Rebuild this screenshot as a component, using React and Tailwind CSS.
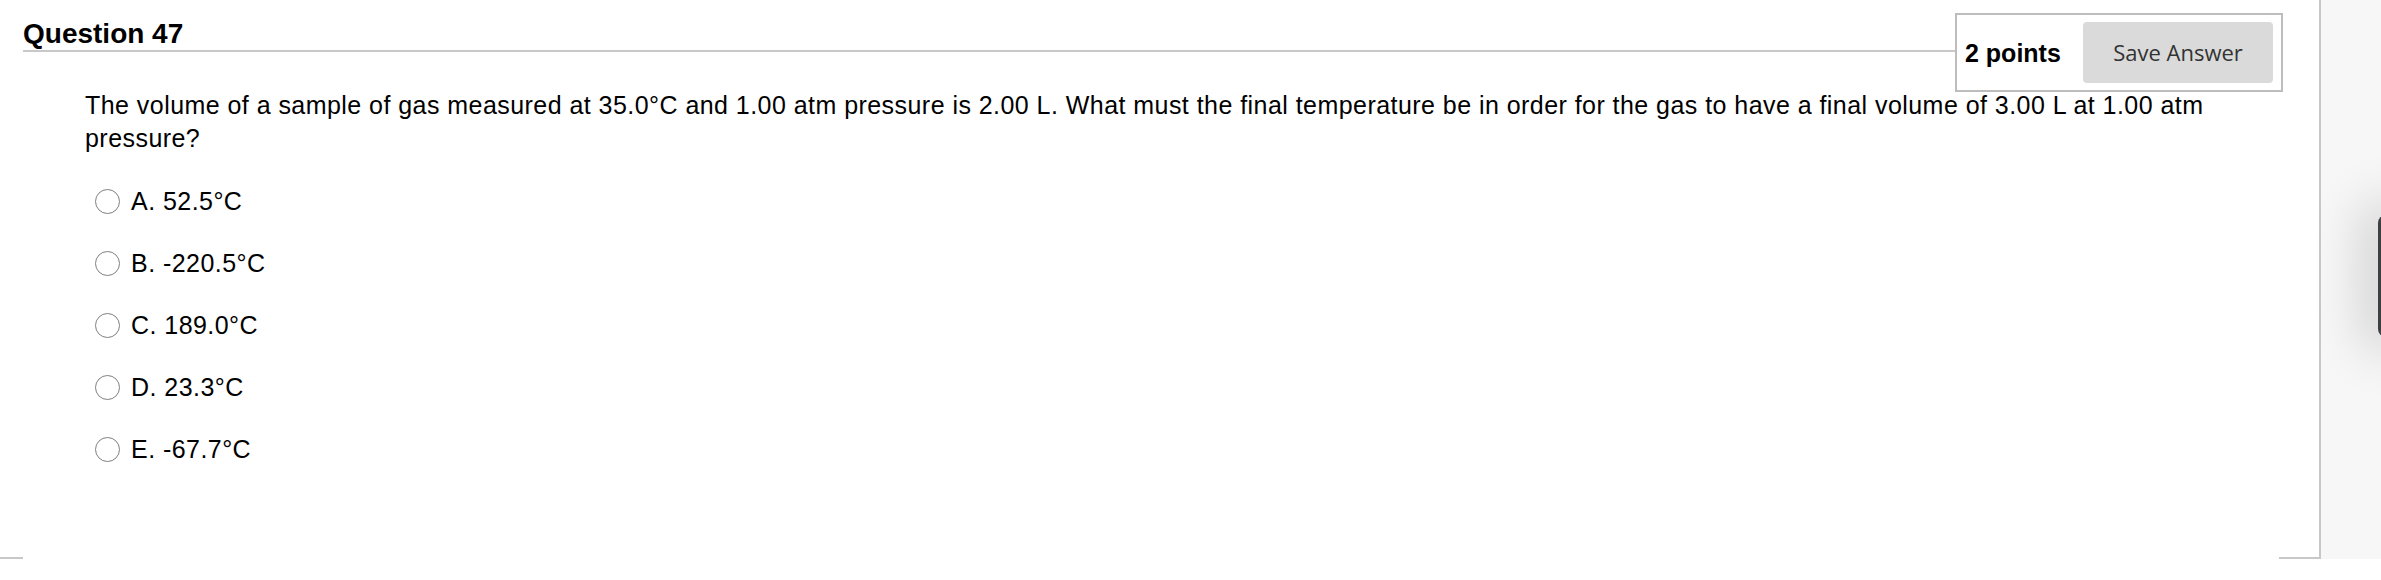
import React from 'react';

const options = [
    { key: 'A', label: '52.5°C' },
    { key: 'B', label: '-220.5°C' },
    { key: 'C', label: '189.0°C' },
    { key: 'D', label: '23.3°C' },
    { key: 'E', label: '-67.7°C' },
];

const App = () => {
    return (
        <div className="flex h-[580px] w-[2381px] items-start bg-white font-['Liberation_Sans',Arial,sans-serif] text-black">
            {/* question panel */}
            <div className="flex h-[559px] w-[2321px] flex-col border-r-2 border-[#c8c8c8]">
                <div className="flex-1">
                    <div className="flex items-start pt-[13px] pl-[23px] pr-[36px]">
                        <div className="h-[39px] flex-1 border-b-2 border-[#c8c8c8] pt-[6px]">
                            <h2 className="text-[28px] font-bold leading-[30px]">Question 47</h2>
                        </div>
                        <div className="flex h-[79px] w-[328px] items-center justify-between border-2 border-[#bdbdbd] bg-white px-[8px]">
                            <span className="text-[25px] font-bold leading-[30px]">2 points</span>
                            <button
                                type="button"
                                className="h-[61px] w-[190px] rounded-[4px] bg-[#dadada] font-['Open_Sans',sans-serif] text-[22px] text-[#333]"
                            >
                                Save Answer
                            </button>
                        </div>
                    </div>

                    <p className="-mt-[3px] pl-[85px] text-[25px] leading-[33px] tracking-[0.45px]">
                        The volume of a sample of gas measured at 35.0°C and 1.00 atm pressure is 2.00 L. What must the final temperature be in order for the gas to have a final volume of 3.00 L at 1.00 atm
                        <br />
                        pressure?
                    </p>

                    <div className="mt-[30px] flex flex-col gap-[28.9px] pl-[95px]">
                        {options.map((opt) => (
                            <label key={opt.key} className="flex h-[33px] items-center gap-[11px] text-[25px] leading-[33px] tracking-[0.45px]">
                                <span className="h-[25px] w-[25px] shrink-0 rounded-full border-[1.5px] border-[#808080] bg-white"></span>
                                <span>{opt.key}. {opt.label}</span>
                            </label>
                        ))}
                    </div>
                </div>
                <div className="flex h-[2px]">
                    <div className="w-[23px] bg-[#c8c8c8]"></div>
                    <div className="flex-1"></div>
                    <div className="w-[40px] bg-[#c8c8c8]"></div>
                </div>
            </div>

            {/* side rail */}
            <div className="relative h-[559px] flex-1 bg-[#f7f7f7]">
                <div className="absolute top-[215px] left-[57px] h-[122px] w-[12px] rounded-l-[8px] bg-[#3b4043] shadow-[0_0_50px_16px_rgba(0,0,0,0.16)]"></div>
            </div>
        </div>
    );
};

export default App;
